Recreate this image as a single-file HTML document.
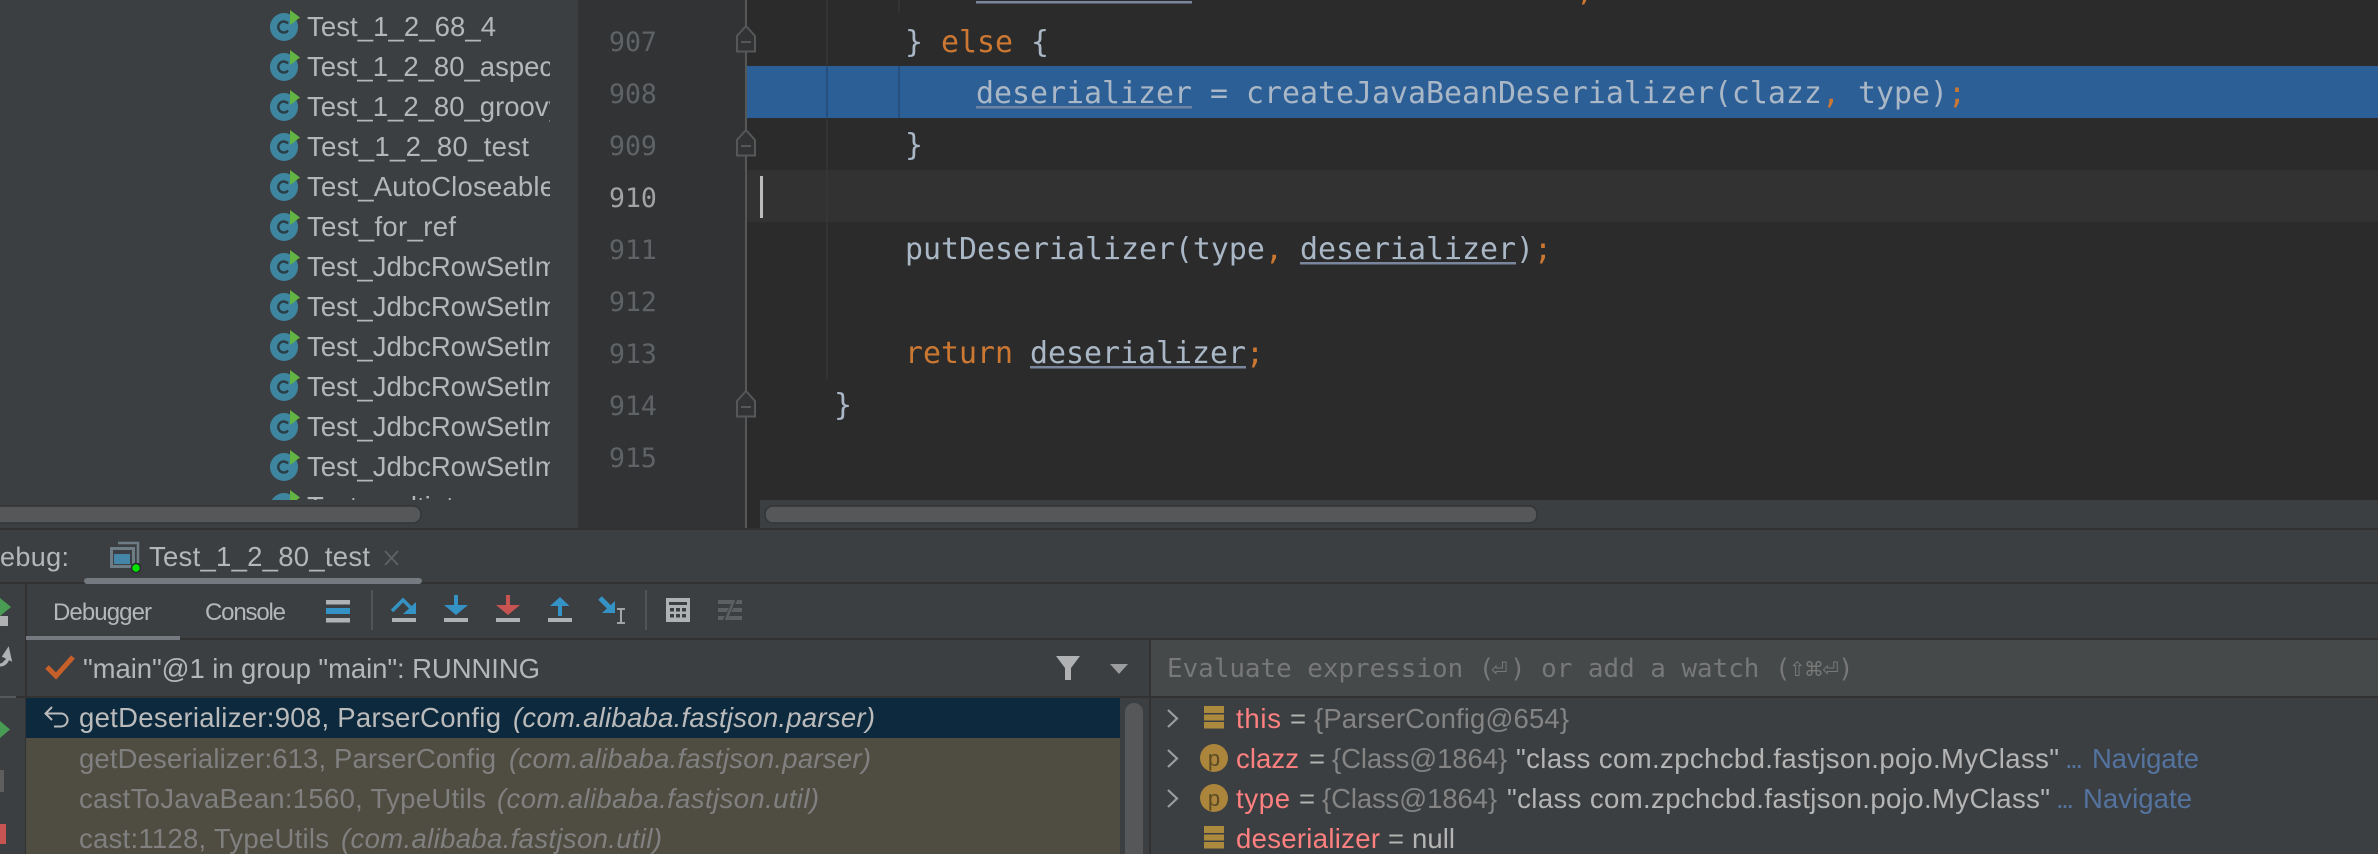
<!DOCTYPE html>
<html><head><meta charset="utf-8"><title>Debug</title>
<style>
html,body{margin:0;padding:0;background:#3c3f41;width:2378px;height:854px;overflow:hidden}
svg{display:block}
.s{font-family:"Liberation Sans",sans-serif;font-size:27.5px}
.i{font-style:italic}
.m{font-family:"DejaVu Sans Mono","Liberation Mono",monospace}
.c{font-size:29.9px;fill:#a9b7c6}
.k{fill:#cc7832}
.n{font-size:26.5px;fill:#606366}
.t{fill:#b4b6b8}
.f{fill:#808080}
.v{fill:#ff8080}
.g{fill:#848484}
.w{fill:#b4b4b4}
.l{fill:#54739f}
</style></head><body>
<svg xmlns="http://www.w3.org/2000/svg" width="2378" height="854" viewBox="0 0 2378 854">
<defs>
<clipPath id="tc"><rect x="0" y="0" width="550" height="500"/></clipPath>
<clipPath id="ec"><rect x="747" y="0" width="1631" height="500"/></clipPath>
<g id="ci">
<circle cx="284" cy="27" r="14" fill="#3e86a0"/>
<path d="M288 23.5a5.5 5.5 0 1 0 0 7" fill="none" stroke="#2b3c44" stroke-width="2.4"/>
<path d="M290 10l10 7.5-10 7.5z" fill="#62b543"/>
</g>
</defs>
<rect width="2378" height="854" fill="#3c3f41"/>

<!-- tree -->
<g clip-path="url(#tc)">
<use href="#ci"/><use href="#ci" y="40"/><use href="#ci" y="80"/><use href="#ci" y="120"/><use href="#ci" y="160"/><use href="#ci" y="200"/><use href="#ci" y="240"/><use href="#ci" y="280"/><use href="#ci" y="320"/><use href="#ci" y="360"/><use href="#ci" y="400"/><use href="#ci" y="440"/><use href="#ci" y="480"/>
<g class="s t">
<text x="307" y="36" textLength="189">Test_1_2_68_4</text>
<text x="307" y="76">Test_1_2_80_aspect</text>
<text x="307" y="116">Test_1_2_80_groovy</text>
<text x="307" y="156" textLength="222">Test_1_2_80_test</text>
<text x="307" y="196" textLength="248">Test_AutoCloseable</text>
<text x="307" y="236" textLength="149">Test_for_ref</text>
<text x="307" y="276">Test_JdbcRowSetImpl</text>
<text x="307" y="316">Test_JdbcRowSetImpl</text>
<text x="307" y="356">Test_JdbcRowSetImpl</text>
<text x="307" y="396">Test_JdbcRowSetImpl</text>
<text x="307" y="436">Test_JdbcRowSetImpl</text>
<text x="307" y="476">Test_JdbcRowSetImpl</text>
<text x="307" y="516">Test_multi_t</text>
</g>
</g>
<rect x="-10" y="506" width="431" height="17" rx="8" fill="#565759" stroke="#333537" stroke-width="1.5"/>

<!-- gutter + editor -->
<rect x="578" y="0" width="168" height="528" fill="#313335"/>
<rect x="746" y="0" width="1632" height="528" fill="#2b2b2b"/>
<rect x="747" y="66" width="1631" height="52" fill="#2d5f97"/>
<rect x="747" y="170" width="1631" height="52" fill="#323232"/>
<rect x="745" y="0" width="2" height="528" fill="#555759"/>
<rect x="826.5" y="0" width="1" height="379" fill="#3b3b3b"/>
<rect x="826.5" y="66" width="1" height="52" fill="#1a3f66"/>
<rect x="898.5" y="0" width="1" height="13" fill="#3b3b3b"/>
<rect x="898.5" y="66" width="1" height="52" fill="#1a3f66"/>
<rect x="760" y="176" width="3" height="42" fill="#bbbbbb"/>

<!-- fold markers -->
<g fill="#313335" stroke="#555759" stroke-width="2">
<path d="M737 51.5V36l9-10 9 10v15.500z"/>
<path d="M737 155.500V140l9-10 9 10v15.500z"/>
<path d="M737 416.500V401l9-10 9 10v15.500z"/>
</g>
<g fill="#555759"><rect x="741" y="41" width="10" height="2"/><rect x="741" y="145" width="10" height="2"/><rect x="741" y="406" width="10" height="2"/></g>

<!-- line numbers -->
<g class="m n">
<text x="609" y="51">907</text>
<text x="609" y="103">908</text>
<text x="609" y="155">909</text>
<text x="609" y="207" style="fill:#a4a3a3">910</text>
<text x="609" y="259">911</text>
<text x="609" y="311">912</text>
<text x="609" y="363">913</text>
<text x="609" y="415">914</text>
<text x="609" y="467">915</text>
</g>

<!-- code -->
<g class="m c" clip-path="url(#ec)">
<rect x="976" y="1" width="216" height="2.500" fill="#7a869e"/>
<text x="1576" y="0" class="k">;</text>
<text x="905" y="52">}</text><text x="941" y="52" class="k">else</text><text x="1031" y="52">{</text>
<text x="976" y="103">deserializer</text>
<text x="1210" y="103">=</text>
<text x="1246" y="103">createJavaBeanDeserializer(clazz</text><text x="1822" y="103" class="k">,</text>
<text x="1858" y="103">type)</text><text x="1948" y="103" class="k">;</text>
<rect x="976" y="106" width="216" height="2.500" fill="#6f83a5"/>
<text x="905" y="155">}</text>
<text x="905" y="259">putDeserializer(type</text><text x="1265" y="259" class="k">,</text>
<text x="1300" y="259">deserializer)</text><text x="1534" y="259" class="k">;</text>
<rect x="1300" y="262" width="216" height="2.500" fill="#7a869e"/>
<text x="905" y="363" class="k">return</text>
<text x="1030" y="363">deserializer</text><text x="1246" y="363" class="k">;</text>
<rect x="1030" y="366" width="216" height="2.500" fill="#7a869e"/>
<text x="834" y="415">}</text>
<text x="834" y="523">}</text>
</g>

<!-- editor hscroll -->
<rect x="760" y="500" width="1618" height="28" fill="#3c3f41"/>
<rect x="765" y="506" width="772" height="17" rx="8" fill="#565759" stroke="#333537" stroke-width="1.5"/>

<!-- dividers -->
<rect x="0" y="528" width="2378" height="2" fill="#323232"/>
<rect x="0" y="582" width="2378" height="2" fill="#323232"/>
<rect x="25" y="584" width="2" height="270" fill="#323232"/>
<rect x="26" y="638" width="2352" height="2" fill="#323232"/>

<!-- debug tab -->
<text x="0" y="566" class="s" style="font-size:27px;fill:#b4b6b8" textLength="69">ebug:</text>
<path d="M118 543h20v20" fill="none" stroke="#6e7c85" stroke-width="2.500"/>
<rect x="111.500" y="548.500" width="22" height="18" fill="#3c3f41" stroke="#6e7c85" stroke-width="3"/>
<rect x="114" y="554" width="16" height="10" fill="#4586a8"/>
<circle cx="136" cy="568" r="4.500" fill="#00e600" stroke="#2b2d2e" stroke-width="1.500"/>
<text x="149" y="566" class="s" style="font-size:27.5px;fill:#b4b6b8" textLength="221">Test_1_2_80_test</text>
<path d="M385 551l13 14m0-14l-13 14" stroke="#5f6265" stroke-width="1.800" fill="none"/>
<rect x="84" y="578" width="338" height="6" rx="3" fill="#747a80"/>

<!-- left strip -->
<path d="M0 598l11 9-11 9z" fill="#499c54"/>
<rect x="0" y="616" width="8" height="10" fill="#afb1b3"/>
<path d="M0 665a8 8 0 0 0 8-8M4 656l4-6 2 9z" fill="#afb1b3" stroke="#afb1b3" stroke-width="3"/>
<rect x="0" y="696" width="16" height="2" fill="#555759"/>
<path d="M0 721l10 8.500-10 8.500z" fill="#499c54"/>
<rect x="0" y="770" width="4" height="22" fill="#5e5e5e"/>
<rect x="0" y="824" width="6" height="20" fill="#c75450"/>

<!-- toolbar tabs -->
<text x="53" y="620" class="s" style="font-size:24px;fill:#b4b6b8" textLength="99">Debugger</text>
<text x="205" y="620" class="s" style="font-size:24px;fill:#b4b6b8" textLength="81">Console</text>
<rect x="26" y="636" width="154" height="4" fill="#747a80"/>

<!-- toolbar icons -->
<rect x="326" y="600" width="24" height="4.500" fill="#afb1b3"/>
<rect x="326" y="608" width="24" height="6" fill="#3592c4"/>
<rect x="326" y="618" width="24" height="4.500" fill="#afb1b3"/>
<rect x="371" y="590" width="2" height="40" fill="#515355"/>
<path d="M392 611l11-11 10 10" fill="none" stroke="#3592c4" stroke-width="3.500"/>
<path d="M416 602v12h-13z" fill="#3592c4"/>
<rect x="392" y="618" width="24" height="4" fill="#afb1b3"/>
<path d="M454 596h4v10h10l-12 10-12-10h10z" fill="#3592c4" transform="translate(0,-1)"/>
<rect x="444" y="618" width="24" height="4" fill="#afb1b3"/>
<path d="M506 596h4v10h10l-12 10-12-10h10z" fill="#c75450" transform="translate(0,-1)"/>
<rect x="496" y="618" width="24" height="4" fill="#afb1b3"/>
<path d="M560 597l9.500 9H562v10h-4v-10h-8z" fill="#3592c4"/>
<rect x="548" y="618" width="24" height="4" fill="#afb1b3"/>
<path d="M600 598l10 10" stroke="#3592c4" stroke-width="5" fill="none"/>
<path d="M615 601v12h-13z" fill="#3592c4"/>
<path d="M617 609h8m-4 0v14m-4 0h8" stroke="#afb1b3" stroke-width="1.800" fill="none"/>
<rect x="645" y="590" width="2" height="40" fill="#515355"/>
<rect x="666" y="598" width="24" height="24" fill="#afb1b3"/>
<g fill="#3c3f41"><rect x="669" y="602" width="18" height="3"/><rect x="670" y="608" width="4" height="3.500"/><rect x="676" y="608" width="4" height="3.500"/><rect x="682" y="608" width="4" height="3.500"/><rect x="670" y="614" width="4" height="3.500"/><rect x="676" y="614" width="4" height="3.500"/><rect x="682" y="614" width="4" height="3.500"/></g>
<g fill="#5d6062"><rect x="718" y="600" width="24" height="4"/><rect x="718" y="608" width="24" height="4"/><rect x="718" y="616" width="24" height="4"/></g>
<path d="M736 598l-12 24" stroke="#3c3f41" stroke-width="4"/>
<path d="M734 600l-8 20" stroke="#5d6062" stroke-width="2.500"/>

<!-- thread row -->
<path d="M47 667l9 9 17-19" fill="none" stroke="#c75f2a" stroke-width="5"/>
<text x="83" y="678" class="s" style="fill:#b4b6b8" textLength="457">"main"@1 in group "main": RUNNING</text>
<path d="M1056 656h24l-9 12v12h-6v-12z" fill="#afb1b3"/>
<path d="M1110 664h18l-9 10z" fill="#9a9c9e"/>

<!-- frames -->
<rect x="0" y="696" width="1149" height="2" fill="#323232"/>
<rect x="0" y="696" width="16" height="2" fill="#555759"/>
<rect x="26" y="698" width="1094" height="40" fill="#0d293e"/>
<rect x="26" y="738" width="1094" height="116" fill="#4f4c41"/>
<path d="M52 707l-6.500 6.500 6.500 6.500M46 713.500h15a6.500 6.500 0 0 1 0 13h-7" fill="none" stroke="#bbbbbb" stroke-width="2"/>
<text x="79" y="727" class="s" style="fill:#bbbbbb" textLength="422">getDeserializer:908, ParserConfig</text>
<text x="513" y="727" class="s i" style="fill:#bbbbbb" textLength="362">(com.alibaba.fastjson.parser)</text>
<text x="79" y="768" class="s f" textLength="417">getDeserializer:613, ParserConfig</text>
<text x="509" y="768" class="s i f" textLength="362">(com.alibaba.fastjson.parser)</text>
<text x="79" y="808" class="s f" textLength="407">castToJavaBean:1560, TypeUtils</text>
<text x="497" y="808" class="s i f" textLength="322">(com.alibaba.fastjson.util)</text>
<text x="79" y="848" class="s f" textLength="250">cast:1128, TypeUtils</text>
<text x="341" y="848" class="s i f" textLength="321">(com.alibaba.fastjson.util)</text>
<rect x="1125" y="703" width="18" height="170" rx="9" fill="#565759"/>

<!-- right panel -->
<rect x="1151" y="640" width="1227" height="56" fill="#45494a"/>
<rect x="1151" y="696" width="1227" height="2" fill="#323232"/>
<rect x="1149" y="640" width="2" height="214" fill="#323232"/>
<g class="m" style="font-size:25.9px;fill:#787878">
<text x="1167" y="677">Evaluate expression (</text>
<text x="1491" y="676" style="font-family:'DejaVu Sans',sans-serif;font-size:20px" textLength="20">⏎</text>
<text x="1510" y="677">) or add a watch (</text>
<text x="1789" y="676" style="font-family:'DejaVu Sans',sans-serif;font-size:20px" textLength="50">⇧⌘⏎</text>
<text x="1838" y="677">)</text>
</g>

<!-- variables -->
<g fill="none" stroke="#9a9c9e" stroke-width="2.200">
<path d="M1168 710l9 8.500-9 8.500"/><path d="M1168 750l9 8.500-9 8.500"/><path d="M1168 790l9 8.500-9 8.500"/>
</g>
<g fill="#ab8a3e"><rect x="1204" y="706" width="20" height="7"/><rect x="1204" y="714.500" width="20" height="6"/><rect x="1204" y="722" width="20" height="6.500"/>
<rect x="1204" y="826" width="20" height="7"/><rect x="1204" y="834.500" width="20" height="6"/><rect x="1204" y="842" width="20" height="6.500"/></g>
<circle cx="1214" cy="758" r="14" fill="#ab853c"/><circle cx="1214" cy="798" r="14" fill="#ab853c"/>
<text x="1214" y="766" text-anchor="middle" class="s" style="font-size:22px;fill:#5c4a22">p</text>
<text x="1214" y="806" text-anchor="middle" class="s" style="font-size:22px;fill:#5c4a22">p</text>

<text x="1236" y="728" class="s v" textLength="45">this</text>
<text x="1290" y="728" class="s w" textLength="15">=</text>
<text x="1314" y="728" class="s g" textLength="255">{ParserConfig@654}</text>

<text x="1236" y="768" class="s v" textLength="63">clazz</text>
<text x="1309" y="768" class="s w" textLength="14">=</text>
<text x="1332" y="768" class="s g" textLength="175">{Class@1864}</text>
<text x="1516" y="768" class="s w" textLength="543">"class com.zpchcbd.fastjson.pojo.MyClass"</text>
<text x="2065" y="768" class="s l" textLength="18">...</text>
<text x="2092" y="768" class="s l" textLength="107">Navigate</text>

<text x="1236" y="808" class="s v" textLength="54">type</text>
<text x="1299" y="808" class="s w" textLength="15">=</text>
<text x="1322" y="808" class="s g" textLength="175">{Class@1864}</text>
<text x="1507" y="808" class="s w" textLength="543">"class com.zpchcbd.fastjson.pojo.MyClass"</text>
<text x="2056" y="808" class="s l" textLength="18">...</text>
<text x="2083" y="808" class="s l" textLength="109">Navigate</text>

<text x="1236" y="848" class="s v" textLength="144">deserializer</text>
<text x="1388" y="848" class="s w" textLength="14">=</text>
<text x="1412" y="848" class="s w" textLength="43">null</text>
</svg>
</body></html>
